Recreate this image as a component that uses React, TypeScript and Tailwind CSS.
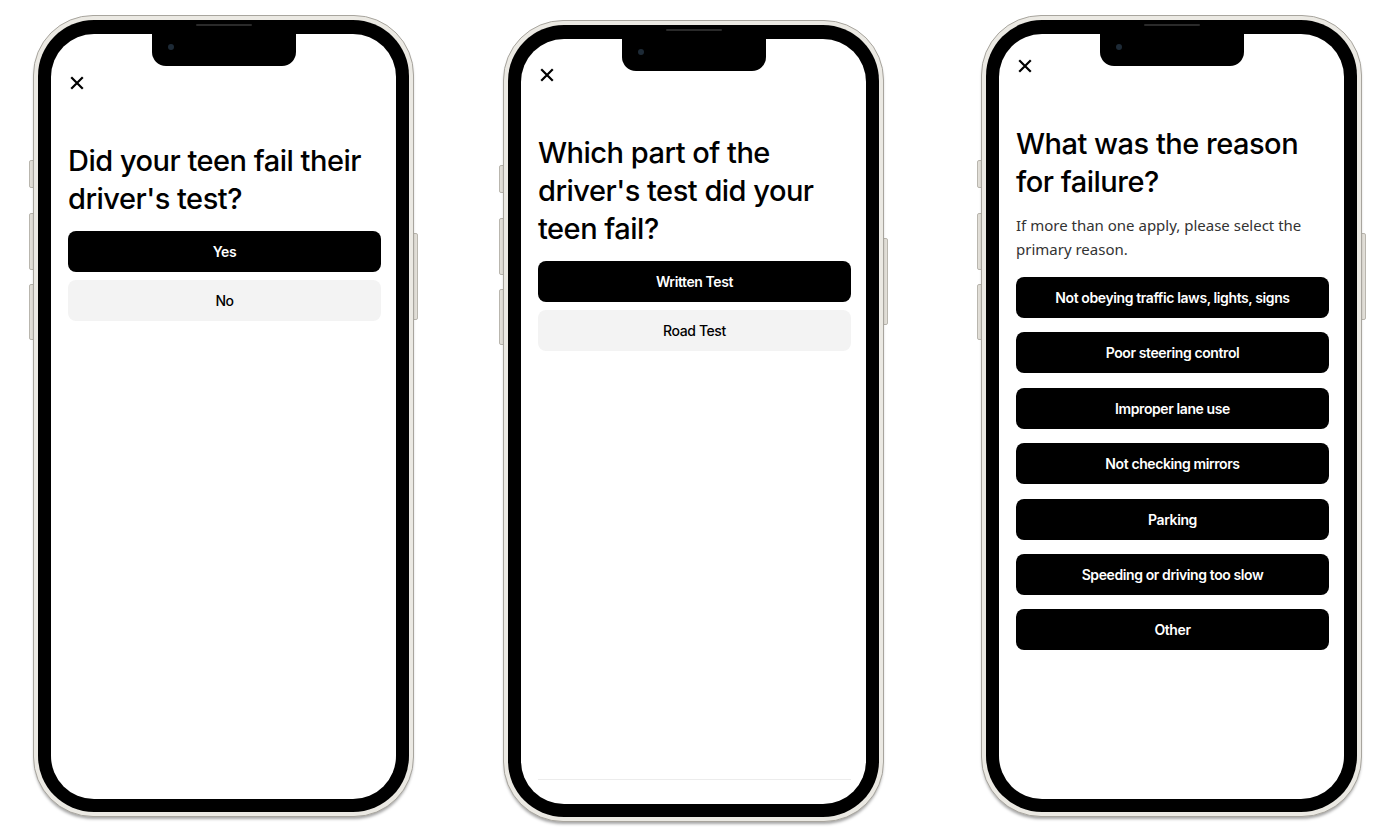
import type { ReactNode } from "react";

type Step = {
    id: string;
    offset: string;
    padTop: string;
    title: string[];
    hint?: string[];
    options: { label: string; primary: boolean }[];
    gap: string;
    footerLine?: boolean;
};

const steps: Step[] = [
    {
        id: "failed",
        offset: "mt-[15px]",
        padTop: "pt-[42px]",
        title: ["Did your teen fail their", "driver's test?"],
        options: [
            { label: "Yes", primary: true },
            { label: "No", primary: false },
        ],
        gap: "gap-2",
    },
    {
        id: "part",
        offset: "mt-[20px]",
        padTop: "pt-[29px]",
        title: ["Which part of the", "driver's test did your", "teen fail?"],
        options: [
            { label: "Written Test", primary: true },
            { label: "Road Test", primary: false },
        ],
        gap: "gap-2",
        footerLine: true,
    },
    {
        id: "reason",
        offset: "mt-[15px]",
        padTop: "pt-[25px]",
        title: ["What was the reason", "for failure?"],
        hint: ["If more than one apply, please select the", "primary reason."],
        options: [
            { label: "Not obeying traffic laws, lights, signs", primary: true },
            { label: "Poor steering control", primary: true },
            { label: "Improper lane use", primary: true },
            { label: "Not checking mirrors", primary: true },
            { label: "Parking", primary: true },
            { label: "Speeding or driving too slow", primary: true },
            { label: "Other", primary: true },
        ],
        gap: "gap-[14.4px]",
    },
];

function CloseIcon() {
    return (
        <svg
            viewBox="0 0 14 14"
            className="ml-[2px] h-[14px] w-[14px]"
            fill="none"
            stroke="#000"
            strokeWidth={2.2}
            strokeLinecap="square"
        >
            <path d="M2 2l10 10M12 2L2 12" />
        </svg>
    );
}

// device shell: steel band, black bezel, notch and side keys
function Phone({ offset, children }: { offset: string; children: ReactNode }) {
    return (
        <div className={`relative shrink-0 ${offset}`}>
            {/* side keys */}
            <div className="absolute left-[-4px] top-[145px] h-[28px] w-[5px] rounded-l-[2px] border border-[#b9b6ae] bg-[#e2dfd8]" />
            <div className="absolute left-[-4px] top-[198px] h-[57px] w-[5px] rounded-l-[2px] border border-[#b9b6ae] bg-[#e2dfd8]" />
            <div className="absolute left-[-4px] top-[269px] h-[56px] w-[5px] rounded-l-[2px] border border-[#b9b6ae] bg-[#e2dfd8]" />
            <div className="absolute right-[-4px] top-[218px] h-[87px] w-[5px] rounded-r-[2px] border border-[#b9b6ae] bg-[#e2dfd8]" />

            <div className="relative h-[802px] w-[381px] rounded-[60px] border border-[#a8a59e] bg-[#ebe9e3] p-[4px] shadow-[0_3px_3px_-1px_rgba(0,0,0,0.35)]">
                <div className="h-full w-full rounded-[56px] bg-black p-[13px] pt-[14px]">
                    <div className="relative h-full w-full overflow-hidden rounded-[43px] bg-white">
                        {/* notch */}
                        <div className="absolute left-1/2 top-0 z-10 h-[32px] w-[144px] -translate-x-1/2 rounded-b-[14px] bg-black">
                            <div className="absolute left-[16px] top-[10px] h-[6px] w-[6px] rounded-full bg-[#1d2a36]" />
                        </div>
                        {children}
                    </div>
                </div>
                <div className="absolute left-1/2 top-[8px] h-[2px] w-[56px] -translate-x-1/2 rounded-full bg-[#2a2a2a]" />
            </div>
        </div>
    );
}

function Screen({ step }: { step: Step }) {
    return (
        <div className={`flex h-full flex-col pl-[17px] pr-[15px] ${step.padTop}`}>
            <CloseIcon />
            <h1 className="mt-[52px] font-['Inter',sans-serif] text-[29px] font-medium leading-[38px] tracking-[-0.5px] text-black">
                {step.title.map((line) => (
                    <span key={line} className="block">
                        {line}
                    </span>
                ))}
            </h1>
            {step.hint && (
                <p className="mt-[12px] font-['Noto_Sans',sans-serif] text-[15px] leading-[24px] text-[#333]">
                    {step.hint.map((line) => (
                        <span key={line} className="block">
                            {line}
                        </span>
                    ))}
                </p>
            )}
            <div className={`${step.hint ? "mt-[16px]" : "mt-[13px]"} flex flex-col ${step.gap}`}>
                {step.options.map((o) => (
                    <button
                        key={o.label}
                        className={`flex h-[41px] items-center justify-center rounded-lg font-['Inter',sans-serif] text-[14px] tracking-[-0.4px] ${
                            o.primary
                                ? "bg-black font-semibold text-white"
                                : "bg-[#f3f3f3] font-medium text-black"
                        }`}
                    >
                        {o.label}
                    </button>
                ))}
            </div>
            {step.footerLine && (
                <div className="mt-auto mb-[24px] h-px bg-[#ececec]" />
            )}
        </div>
    );
}

export default function App() {
    return (
        <div className="flex h-[828px] w-[1386px] items-start overflow-hidden bg-white pl-[33px]">
            <Phone offset={steps[0].offset}>
                <Screen step={steps[0]} />
            </Phone>
            <div className="ml-[89px]">
                <Phone offset={steps[1].offset}>
                    <Screen step={steps[1]} />
                </Phone>
            </div>
            <div className="ml-[97px]">
                <Phone offset={steps[2].offset}>
                    <Screen step={steps[2]} />
                </Phone>
            </div>
        </div>
    );
}
